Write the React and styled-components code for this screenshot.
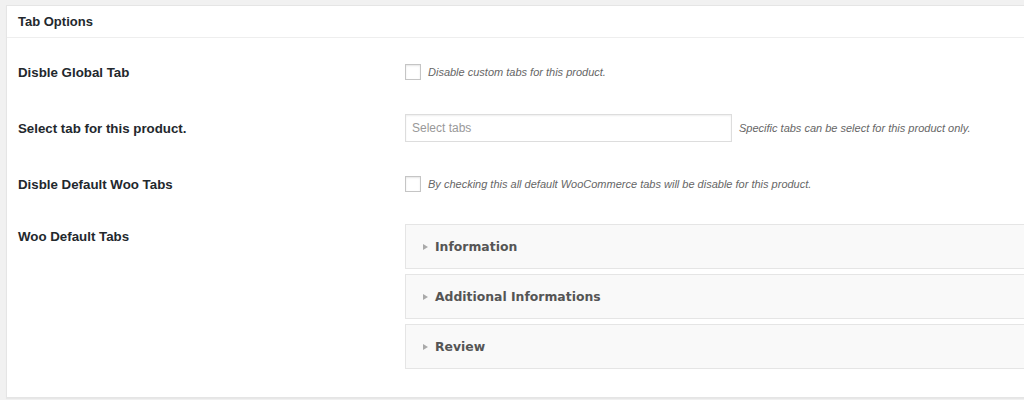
import React from "react";
import styled, { createGlobalStyle } from "styled-components";

const Global = createGlobalStyle`
  html, body { margin: 0; padding: 0; background: #f1f1f1; }
  body { font-family: "Liberation Sans", Arial, sans-serif; overflow: hidden; }
  #root { width: 1024px; height: 400px; overflow: hidden; }
`;

const Page = styled.div`
  padding: 5px 0 0 6px;
`;

const Panel = styled.section`
  background: #fff;
  border: 1px solid #e5e5e5;
  border-right: none;
  margin-right: -40px;
  box-shadow: 0 1px 1px rgba(0, 0, 0, 0.04);
  height: 393px;
  box-sizing: border-box;
`;

const Header = styled.h2`
  margin: 0;
  height: 31px;
  display: flex;
  align-items: center;
  padding: 0 11px;
  font-size: 13px;
  font-weight: 700;
  color: #23282d;
  border-bottom: 1px solid #eee;
`;

const Body = styled.div`
  padding: 6px 0 0 11px;
`;

const Row = styled.div`
  display: grid;
  grid-template-columns: 387px 1fr;
  align-items: ${(p) => (p.$top ? "start" : "center")};
  min-height: 56px;
  padding-top: ${(p) => (p.$top ? "12px" : "0")};
`;

const Label = styled.div`
  font-size: 13.3px;
  font-weight: 700;
  color: #23282d;
  line-height: ${(p) => (p.$top ? "26px" : "normal")};
`;

const Field = styled.div`
  display: flex;
  align-items: center;
  gap: 7px;
`;

const Check = styled.span`
  width: 14px;
  height: 14px;
  border: 1px solid #c5c5c5;
  background: #fff;
  box-shadow: inset 0 1px 2px rgba(0, 0, 0, 0.1);
  flex: none;
`;

const Help = styled.span`
  font-size: 11px;
  font-style: italic;
  color: #666;
`;

const Select = styled.div`
  width: 313px;
  height: 26px;
  border: 1px solid #ddd;
  box-shadow: inset 0 1px 2px rgba(0, 0, 0, 0.07);
  display: flex;
  align-items: center;
  padding: 0 6px;
  box-sizing: content-box;
  font-size: 12px;
  color: #999;
  flex: none;
`;

const Tabs = styled.div`
  display: flex;
  flex-direction: column;
  gap: 5px;
`;

const Tab = styled.div`
  height: 43px;
  background: #f9f9f9;
  border: 1px solid #e5e5e5;
  border-right: none;
  display: flex;
  align-items: center;
  padding-left: 17px;
  gap: 7px;
  font-family: "DejaVu Sans", Verdana, sans-serif;
  font-size: 12.4px;
  font-weight: 700;
  color: #555;
`;

const Arrow = styled.span`
  width: 0;
  height: 0;
  border-top: 3.5px solid transparent;
  border-bottom: 3.5px solid transparent;
  border-left: 5px solid #aaa;
`;

const tabs = ["Information", "Additional Informations", "Review"];

export default function App() {
  return (
    <>
      <Global />
      <Page>
        <Panel>
          <Header>Tab Options</Header>
          <Body>
            <Row>
              <Label>Disble Global Tab</Label>
              <Field>
                <Check />
                <Help>Disable custom tabs for this product.</Help>
              </Field>
            </Row>
            <Row>
              <Label>Select tab for this product.</Label>
              <Field>
                <Select>Select tabs</Select>
                <Help>Specific tabs can be select for this product only.</Help>
              </Field>
            </Row>
            <Row>
              <Label>Disble Default Woo Tabs</Label>
              <Field>
                <Check />
                <Help>
                  By checking this all default WooCommerce tabs will be disable for this product.
                </Help>
              </Field>
            </Row>
            <Row $top>
              <Label $top>Woo Default Tabs</Label>
              <Tabs>
                {tabs.map((t) => (
                  <Tab key={t}>
                    <Arrow />
                    {t}
                  </Tab>
                ))}
              </Tabs>
            </Row>
          </Body>
        </Panel>
      </Page>
    </>
  );
}
